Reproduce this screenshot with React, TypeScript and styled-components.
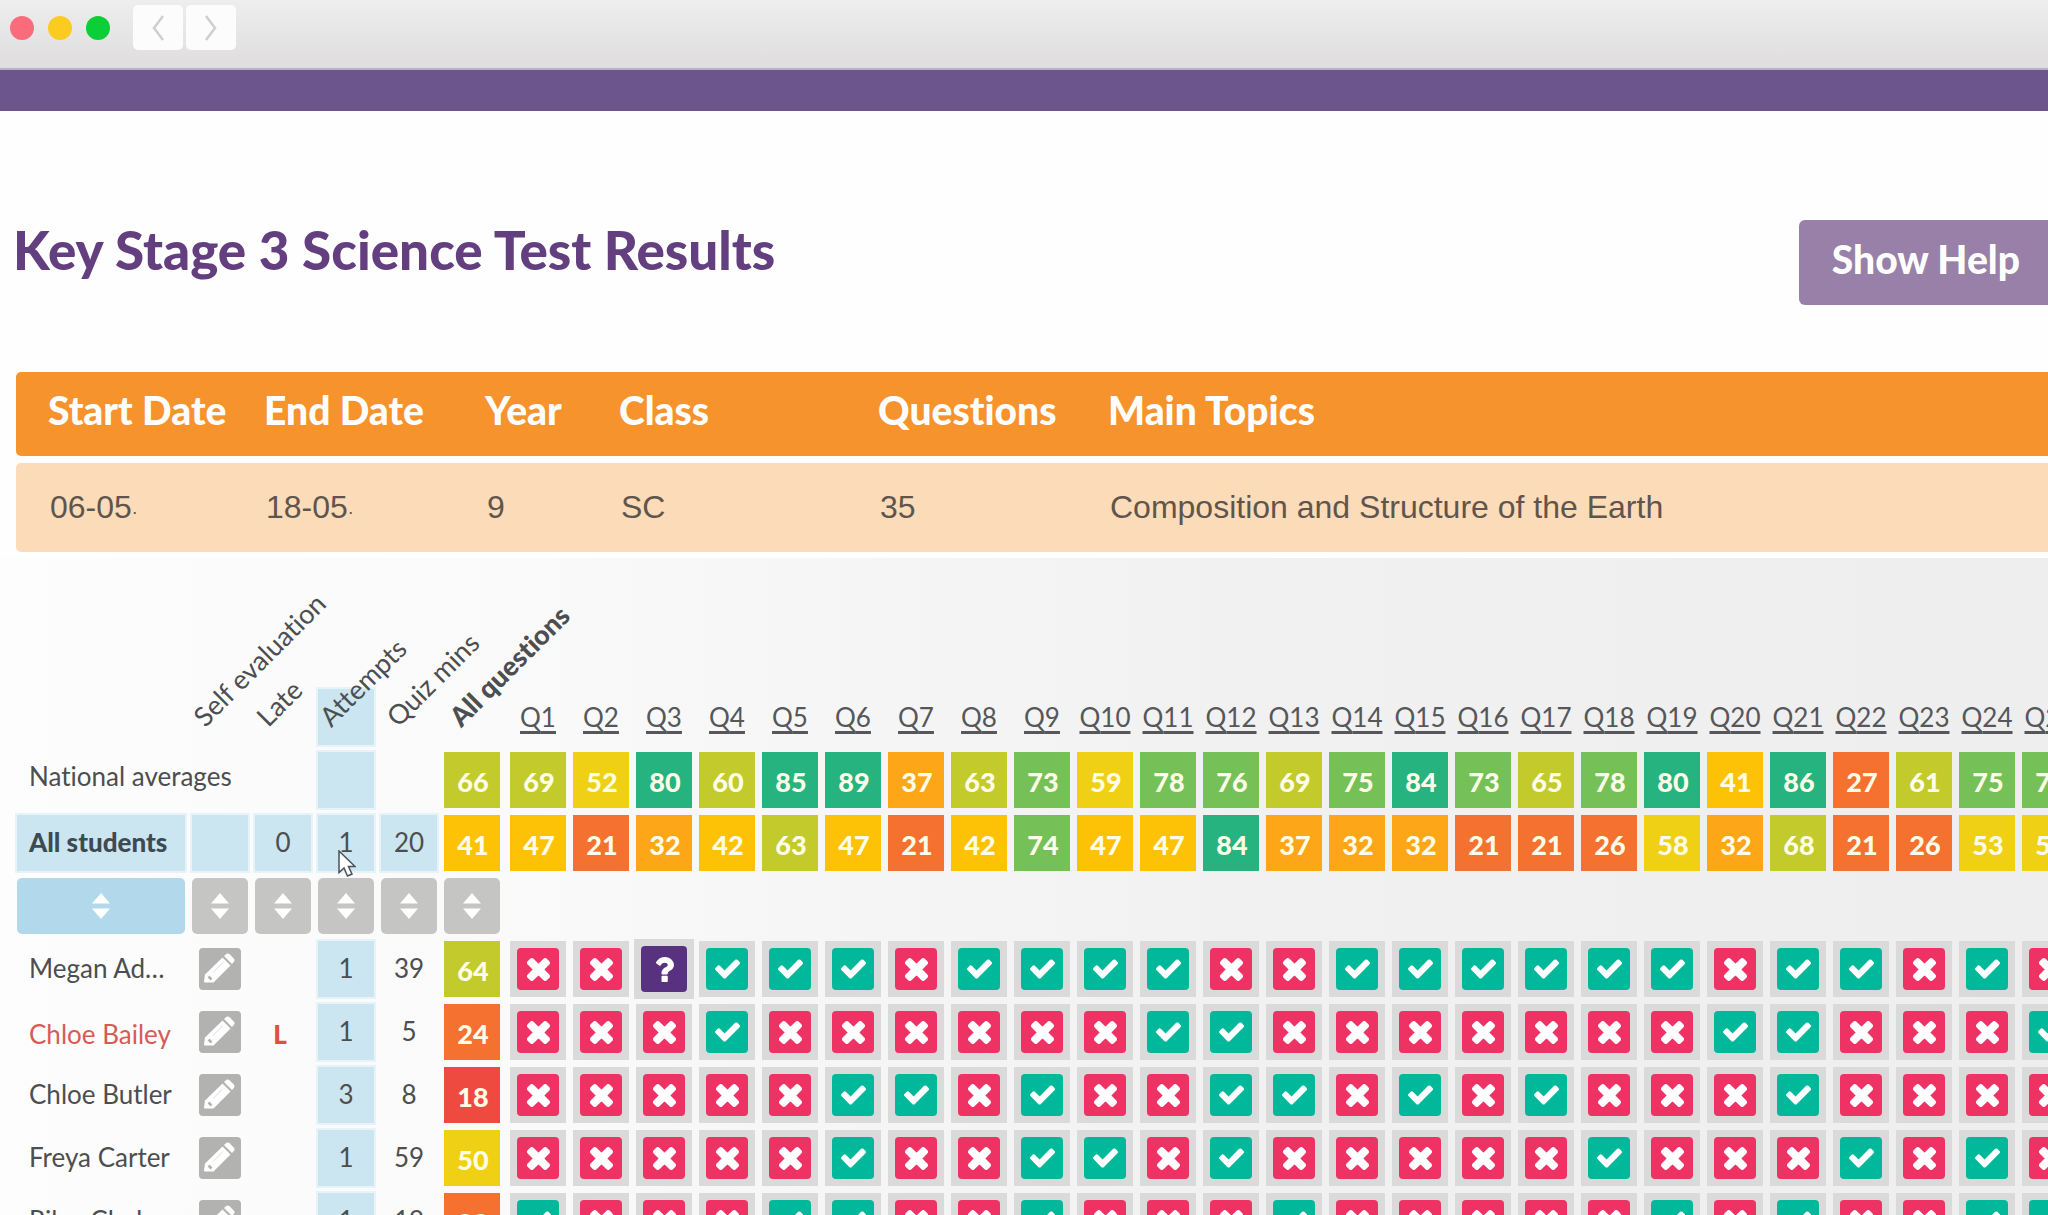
import React from 'react';
import styled, { createGlobalStyle, css } from 'styled-components';

const GlobalStyle = createGlobalStyle`
  * { box-sizing: border-box; }
  body { margin: 0; background: #fdfefd; overflow: hidden; }
`;

const ui = `Lato, "Open Sans", sans-serif`;
const plain = `"Liberation Sans", Arial, sans-serif`;

const Page = styled.div`
  height: 100vh;
  overflow: hidden;
  display: flex;
  flex-direction: column;
  font-family: ${ui};
  font-variant-ligatures: none;
  color: #4c4e50;
`;

const WindowBar = styled.header`
  display: flex;
  align-items: center;
  flex: none;
  height: 70px;
  padding: 0 10px 13px;
  background: linear-gradient(#eeeeee, #dfdddd);
  border-bottom: 2px solid #b9aecb;
`;

const Lights = styled.div`
  display: flex;
  gap: 14px;
  margin-right: 23px;
`;

const Light = styled.span<{ $color: string }>`
  width: 24px;
  height: 24px;
  border-radius: 50%;
  background: ${(p) => p.$color};
`;

const NavButton = styled.button`
  display: flex;
  align-items: center;
  justify-content: center;
  width: 50px;
  height: 45px;
  margin-right: 3px;
  padding: 0;
  border: 0;
  border-radius: 5px;
  background: #fcfcfc;
`;

const BrandStrip = styled.div`
  flex: none;
  height: 41px;
  background: #6c548d;
`;

const Heading = styled.div`
  display: flex;
  flex: none;
  justify-content: space-between;
  align-items: flex-start;
  padding: 109px 0 67px 13px;
`;

const Title = styled.h1`
  margin: 0;
  font-size: 53px;
  line-height: 60px;
  font-weight: 900;
  color: #633f80;
`;

const HelpButton = styled.button`
  flex: none;
  height: 85px;
  padding: 0 28px 7px 33px;
  border: 0;
  border-radius: 6px 0 0 6px;
  background: #9880a9;
  color: #fff;
  font-family: ${ui};
  font-size: 39px;
  font-weight: 900;
`;

const Summary = styled.table`
  flex: none;
  width: 100%;
  padding-left: 16px;
  table-layout: fixed;
  border-collapse: separate;
  border-spacing: 0;
`;

const SummaryHead = styled.th`
  height: 84px;
  padding: 0 0 8px;
  background: #f7932d;
  color: #fff;
  text-align: left;
  font-size: 39px;
  font-weight: 900;
  white-space: nowrap;
  &:first-child { padding-left: 32px; border-radius: 5px 0 0 5px; }
`;

const SummaryGap = styled.tr`
  height: 7px;
`;

const SummaryCell = styled.td`
  height: 89px;
  padding: 0 0 0 2px;
  background: #fcdbb9;
  color: #5f554c;
  font-family: ${plain};
  font-size: 32px;
  white-space: nowrap;
  &:first-child { padding-left: 34px; border-radius: 5px 0 0 5px; }
`;

const SmallDot = styled.span`
  font-size: 18px;
`;

const Results = styled.main`
  flex: 1;
  min-height: 0;
  margin-top: 6px;
  padding: 124px 0 0 10px;
  overflow: hidden;
  background: linear-gradient(90deg, #fdfdfd 0, #fafafa 24%, #f1f1f1 60%, #eeeeee 100%);
`;

const Grid = styled.table`
  width: max-content;
  table-layout: fixed;
  border-collapse: separate;
  border-spacing: 7px;
  font-size: 26px;
`;

const cell = css`
  height: 56px;
  padding: 0;
  text-align: center;
  vertical-align: middle;
  white-space: nowrap;
`;

const blueFill = css`
  background: #cbe5f1;
  box-shadow: 0 0 0 2px #e6f3f8;
`;

const Cell = styled.td<{ $blue?: boolean }>`
  ${cell}
  ${(p) => p.$blue && blueFill}
`;

const NumberCell = styled(Cell)`
  padding-bottom: 3px;
`;

const nameColors = { all: '#3d4a52', late: '#d75b52', national: '#4c4e50', normal: '#4c4e50' };
const namePadding = { all: '0 0 3px 12px', late: '3px 0 0 12px', national: '0 0 8px 12px', normal: '0 0 3px 12px' };

const NameCell = styled.th<{ $tone: keyof typeof nameColors }>`
  ${cell}
  padding: ${(p) => namePadding[p.$tone]};
  text-align: left;
  font-weight: ${(p) => (p.$tone === 'all' ? 900 : 400)};
  color: ${(p) => nameColors[p.$tone]};
  ${(p) => p.$tone === 'all' && blueFill}
`;

const SlantHead = styled.th<{ $blue?: boolean; $bold?: boolean }>`
  ${cell}
  position: relative;
  font-size: 27px;
  font-weight: ${(p) => (p.$bold ? 900 : 400)};
  ${(p) => p.$blue && blueFill}
`;

const Slant = styled.span<{ $inset?: boolean }>`
  position: absolute;
  left: ${(p) => (p.$inset ? 20 : 16)}px;
  bottom: 14px;
  line-height: 28px;
  transform: rotate(-45deg);
  transform-origin: 0 100%;
`;

const QuestionHead = styled.th`
  ${cell}
  font-weight: 400;
`;

const QuestionLink = styled.a`
  color: #55575a;
  text-decoration: underline;
  text-decoration-thickness: 3px;
  text-underline-offset: 4px;
  text-decoration-skip-ink: none;
`;

const Score = styled.div<{ $value: number }>`
  width: 56px;
  height: 56px;
  padding: 4px 0 0 2px;
  line-height: 52px;
  text-align: center;
  font-size: 27px;
  font-weight: 900;
  color: #fffde8;
  background: ${(p) => band(p.$value)};
`;

const SortButton = styled.button<{ $active?: boolean }>`
  display: flex;
  align-items: center;
  justify-content: center;
  width: ${(p) => (p.$active ? '168px' : '56px')};
  height: 56px;
  padding: 0;
  border: 0;
  border-radius: 5px;
  background: ${(p) => (p.$active ? '#b1d8eb' : '#c5c5c4')};
`;

const EditButton = styled.button`
  display: block;
  width: 42px;
  height: 42px;
  margin: 0 auto;
  padding: 0;
  border: 0;
  border-radius: 4px;
  background: #b2b2b1;
`;

const AnswerCell = styled.td<{ $open?: boolean }>`
  ${cell}
  background: #d9dad9;
  ${(p) => p.$open && 'box-shadow: 0 0 0 2px #d9dad9;'}
`;

const tones = { x: '#ee3264', v: '#01b89b', q: '#583281' };
type Mark = keyof typeof tones;

const Answer = styled.span<{ $mark: Mark }>`
  display: flex;
  align-items: center;
  justify-content: center;
  width: ${(p) => (p.$mark === 'q' ? 46 : 42)}px;
  height: ${(p) => (p.$mark === 'q' ? 46 : 42)}px;
  margin: 0 auto;
  border-radius: 4px;
  background: ${(p) => tones[p.$mark]};
`;

const LateCell = styled(Cell)`
  padding: 3px 6px 0 0;
`;

const LateFlag = styled.strong`
  color: #e0503f;
  font-weight: 900;
`;

const PointerCell = styled(NumberCell)`
  position: relative;
`;

const Pointer = styled.svg`
  position: absolute;
  left: 20px;
  top: 35px;
  z-index: 2;
`;

function band(n: number) {
  if (n < 20) return '#ef4a3f';
  if (n < 30) return '#f4712f';
  if (n < 40) return '#fca618';
  if (n < 50) return '#fdc206';
  if (n < 60) return '#efd014';
  if (n < 70) return '#c3cb2c';
  if (n < 80) return '#75c158';
  return '#27b37f';
}

const markIcons: Record<Mark, React.ReactNode> = {
  x: (
    <svg width="23" height="23" viewBox="80 336 1248 1248" fill="#fff" stroke="#fff" strokeWidth="60">
      <path d="M1298 1322q0 40-28 68l-136 136q-28 28-68 28t-68-28l-294-294-294 294q-28 28-68 28t-68-28l-136-136q-28-28-28-68t28-68l294-294-294-294q-28-28-28-68t28-68l136-136q28-28 68-28t68 28l294 294 294-294q28-28 68-28t68 28l136 136q28 28 28 68t-28 68l-294 294 294 294q28 28 28 68z" />
    </svg>
  ),
  v: (
    <svg width="25" height="20" viewBox="121 334 1550 1188" fill="#fff">
      <path d="M1671 566q0 40-28 68l-724 724-136 136q-28 28-68 28t-68-28l-136-136-362-362q-28-28-28-68t28-68l136-136q28-28 68-28t68 28l294 295 656-657q28-28 68-28t68 28l136 136q28 28 28 68z" />
    </svg>
  ),
  q: (
    <svg width="20" height="25" viewBox="386 256 1018 1280" fill="#fff">
      <path d="M1088 1256v240q0 16-12 28t-28 12h-240q-16 0-28-12t-12-28v-240q0-16 12-28t28-12h240q16 0 28 12t12 28zm316-600q0 54-15.500 101t-35 76.500-55 59.500-57.500 43.500-61 35.500q-41 23-68.500 65t-27.500 67q0 17-12 32.500t-28 15.500h-240q-15 0-25.500-18.500t-10.500-37.500v-45q0-83 65-156.500t143-108.500q59-27 84-56t25-76q0-42-46.500-74t-107.500-32q-65 0-108 29-35 25-107 115-13 16-31 16-12 0-25-8l-164-125q-13-10-15.500-25t5.500-28q160-266 464-266 80 0 161 31t146 83 106 127.500 41 158.500z" />
    </svg>
  ),
};

const SortIcon = () => (
  <svg width="18" height="26" viewBox="0 0 18 26" fill="#fff">
    <path d="M9 0l9 10.500H0zM9 26l9-10.500H0z" />
  </svg>
);

const PencilIcon = () => (
  <svg width="42" height="42" viewBox="0 0 42 42">
    <path d="M6 26.500L23.500 9.500l8 8L14.500 34.500H6q-1 0-1-1z" fill="#fff" />
    <path d="M25 8l2.500-2.200q1.500-1 3 .5l4.500 4.500q1.200 1.500 0 3L33 16z" fill="#fff" />
    <path d="M14 24.500L24 14.500" stroke="#dcdcdb" strokeWidth="1" />
    <path d="M9.500 28.500l3 3" stroke="#b2b2b1" strokeWidth="2.500" />
  </svg>
);

const Chevron = ({ d }: { d: string }) => (
  <svg width="16" height="26" viewBox="0 0 16 26" fill="none" stroke="#cfcfcf" strokeWidth="2.500">
    <path d={d} />
  </svg>
);

const national = [69, 52, 80, 60, 85, 89, 37, 63, 73, 59, 78, 76, 69, 75, 84, 73, 65, 78, 80, 41, 86, 27, 61, 75, 75];
const everyone = [47, 21, 32, 42, 63, 47, 21, 42, 74, 47, 47, 84, 37, 32, 32, 21, 21, 26, 58, 32, 68, 21, 26, 53, 53];

const students = [
  { name: 'Megan Ad…', late: false, attempts: 1, mins: 39, score: 64, marks: 'xxqvvvxvvvvxxvvvvvvxvvxvx' },
  { name: 'Chloe Bailey', late: true, attempts: 1, mins: 5, score: 24, marks: 'xxxvxxxxxxvvxxxxxxxvvxxxv' },
  { name: 'Chloe Butler', late: false, attempts: 3, mins: 8, score: 18, marks: 'xxxxxvvxvxxvvxvxvxxxvxxxx' },
  { name: 'Freya Carter', late: false, attempts: 1, mins: 59, score: 50, marks: 'xxxxxvxxvvxvxxxxxvxxxvxvx' },
  { name: 'Riley Clarke', late: false, attempts: 1, mins: 19, score: 29, marks: 'vxxxvvxxvxxxvxxxxxvxvxxvv' },
];

const sortKeys = ['self evaluation', 'late', 'attempts', 'quiz mins', 'all questions'];

export default function App() {
  return (
    <Page>
      <GlobalStyle />
      <WindowBar>
        <Lights>
          <Light $color="#fb6b7c" />
          <Light $color="#fbcb1f" />
          <Light $color="#0ccf38" />
        </Lights>
        <NavButton aria-label="Back">
          <Chevron d="M13 1L4 13l9 12" />
        </NavButton>
        <NavButton aria-label="Forward">
          <Chevron d="M3 1l9 12-9 12" />
        </NavButton>
      </WindowBar>
      <BrandStrip />
      <Heading>
        <Title>Key Stage 3 Science Test Results</Title>
        <HelpButton>Show Help</HelpButton>
      </Heading>
      <Summary>
        <colgroup>
          <col style={{ width: 248 }} />
          <col style={{ width: 221 }} />
          <col style={{ width: 134 }} />
          <col style={{ width: 259 }} />
          <col style={{ width: 230 }} />
          <col />
        </colgroup>
        <thead>
          <tr>
            {['Start Date', 'End Date', 'Year', 'Class', 'Questions', 'Main Topics'].map((h) => (
              <SummaryHead key={h} scope="col">{h}</SummaryHead>
            ))}
          </tr>
        </thead>
        <tbody>
          <SummaryGap aria-hidden="true" />
          <tr>
            <SummaryCell>06-05<SmallDot>·</SmallDot></SummaryCell>
            <SummaryCell>18-05<SmallDot>·</SmallDot></SummaryCell>
            <SummaryCell>9</SummaryCell>
            <SummaryCell>SC</SummaryCell>
            <SummaryCell>35</SummaryCell>
            <SummaryCell>Composition and Structure of the Earth</SummaryCell>
          </tr>
        </tbody>
      </Summary>
      <Results>
        <Grid>
          <colgroup>
            <col style={{ width: 168 }} />
            {[0, 1, 2, 3].map((i) => <col key={i} style={{ width: 56 }} />)}
            <col style={{ width: 59 }} />
            {national.map((_, i) => <col key={i} style={{ width: 56 }} />)}
          </colgroup>
          <thead>
            <tr>
              <Cell />
              <SlantHead><Slant>Self evaluation</Slant></SlantHead>
              <SlantHead><Slant>Late</Slant></SlantHead>
              <SlantHead $blue><Slant>Attempts</Slant></SlantHead>
              <SlantHead><Slant $inset>Quiz mins</Slant></SlantHead>
              <SlantHead $bold><Slant $inset>All questions</Slant></SlantHead>
              {national.map((_, i) => (
                <QuestionHead key={i} scope="col">
                  <QuestionLink href={`#q${i + 1}`}>Q{i + 1}</QuestionLink>
                </QuestionHead>
              ))}
            </tr>
          </thead>
          <tbody>
            <tr>
              <NameCell scope="row" colSpan={3} $tone="national">National averages</NameCell>
              <Cell $blue />
              <Cell />
              <Cell><Score $value={66}>66</Score></Cell>
              {national.map((n, i) => <Cell key={i}><Score $value={n}>{n}</Score></Cell>)}
            </tr>
            <tr>
              <NameCell scope="row" $tone="all">All students</NameCell>
              <Cell $blue />
              <NumberCell $blue>0</NumberCell>
              <PointerCell $blue>
                1
                <Pointer width="18" height="28" viewBox="0 0 18 28">
                  <path d="M1 1v21.500l5-4.500 3.500 8 4.500-2-3.500-7.500H17z" fill="#fff" stroke="#4a4f58" strokeWidth="1.500" />
                </Pointer>
              </PointerCell>
              <NumberCell $blue>20</NumberCell>
              <Cell><Score $value={41}>41</Score></Cell>
              {everyone.map((n, i) => <Cell key={i}><Score $value={n}>{n}</Score></Cell>)}
            </tr>
            <tr>
              <Cell><SortButton $active aria-label="Sort by name"><SortIcon /></SortButton></Cell>
              {sortKeys.map((k) => (
                <Cell key={k}><SortButton aria-label={`Sort by ${k}`}><SortIcon /></SortButton></Cell>
              ))}
            </tr>
            {students.map((s) => (
              <tr key={s.name}>
                <NameCell scope="row" $tone={s.late ? 'late' : 'normal'}>{s.name}</NameCell>
                <Cell><EditButton aria-label={`Edit self evaluation for ${s.name}`}><PencilIcon /></EditButton></Cell>
                <LateCell>{s.late && <LateFlag>L</LateFlag>}</LateCell>
                <NumberCell $blue>{s.attempts}</NumberCell>
                <NumberCell>{s.mins}</NumberCell>
                <Cell><Score $value={s.score}>{s.score}</Score></Cell>
                {(s.marks.split('') as Mark[]).map((m, i) => (
                  <AnswerCell key={i} $open={m === 'q'}><Answer $mark={m}>{markIcons[m]}</Answer></AnswerCell>
                ))}
              </tr>
            ))}
          </tbody>
        </Grid>
      </Results>
    </Page>
  );
}
